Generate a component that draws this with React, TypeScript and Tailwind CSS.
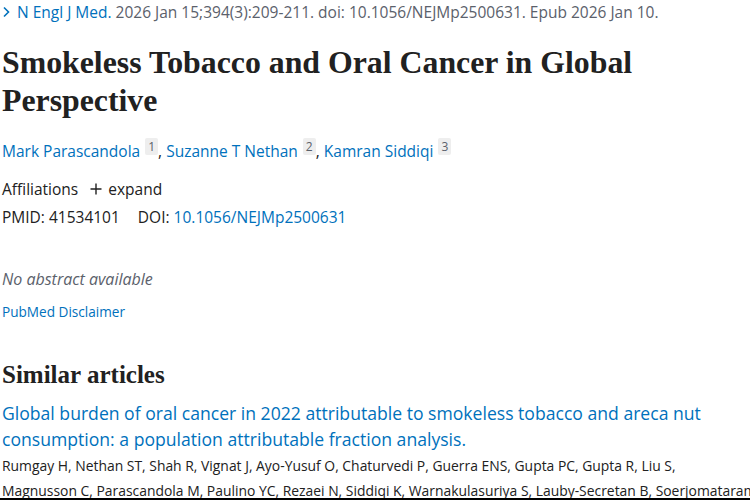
import React from 'react';

const sans = "font-['Open_Sans',_'Noto_Sans',_sans-serif]";
const serif = "font-['Liberation_Serif',_serif]";

const Sup = ({ n }: { n: string }) => (
  <sup className="ml-[5px] rounded-[2px] bg-[#eeeeee] px-[3px] text-[12px] text-[#5b616b] top-[-6px]">{n}</sup>
);

export default function App() {
  const authors = ['Mark Parascandola', 'Suzanne T Nethan', 'Kamran Siddiqi'];

  return (
    <div className={`relative h-[500px] w-[750px] overflow-hidden bg-white pl-[2px] ${sans}`}>
      <div className="flex items-center gap-[6px] pt-[2px] text-[15.5px] leading-[20px] text-[#5b616b]">
        <svg width="9" height="12" viewBox="0 0 9 12" className="text-[#0071bc]">
          <path d="M2 1.5 L6.5 6 L2 10.5" fill="none" stroke="currentColor" strokeWidth="1.6" />
        </svg>
        <p className="whitespace-nowrap">
          <span className="text-[#0071bc]">N Engl J Med.</span> 2026 Jan 15;394(3):209-211. doi: 10.1056/NEJMp2500631. Epub 2026 Jan 10.
        </p>
      </div>

      <h1 className={`mt-[22px] text-[31.8px] font-bold leading-[38px] text-[#212121] ${serif}`}>
        Smokeless Tobacco and Oral Cancer in Global Perspective
      </h1>

      <p className="mt-[20px] text-[15.5px] leading-[22px] text-[#0071bc]">
        {authors.map((a, i) => (
          <span key={a}>
            {a}
            <Sup n={String(i + 1)} />
            {i < authors.length - 1 && <span className="text-[#212121]">, </span>}
          </span>
        ))}
      </p>

      <div className="mt-[16px] flex items-center gap-[12px] text-[15.5px] leading-[22px] text-[#212121]">
        <span>Affiliations</span>
        <span className="flex items-center gap-[6px]">
          <svg width="12" height="12" viewBox="0 0 12 12">
            <path d="M6 0.5 V11.5 M0.5 6 H11.5" stroke="#212121" strokeWidth="1.4" />
          </svg>
          <span>expand</span>
        </span>
      </div>

      <p className="mt-[6px] text-[15.5px] leading-[22px] text-[#212121]">
        PMID: 41534101<span className="ml-[18px]">DOI: </span>
        <span className="text-[#0071bc]">10.1056/NEJMp2500631</span>
      </p>

      <p className="mt-[40px] text-[16px] italic leading-[22px] text-[#5b616b]">No abstract available</p>

      <p className="mt-[12px] text-[13.6px] leading-[20px] text-[#0071bc]">PubMed Disclaimer</p>

      <h2 className={`mt-[37px] text-[25px] font-bold leading-[32px] text-[#212121] ${serif}`}>Similar articles</h2>

      <p className="mt-[9px] w-[760px] text-[17.6px] leading-[26px] text-[#0071bc]">
        Global burden of oral cancer in 2022 attributable to smokeless tobacco and areca nut consumption: a population attributable fraction analysis.
      </p>
      <p className="mt-[1px] w-[820px] text-[13.9px] leading-[25px] text-[#212121]">
        Rumgay H, Nethan ST, Shah R, Vignat J, Ayo-Yusuf O, Chaturvedi P, Guerra ENS, Gupta PC, Gupta R, Liu S,
        <br />
        Magnusson C, Parascandola M, Paulino YC, Rezaei N, Siddiqi K, Warnakulasuriya S, Lauby-Secretan B, Soerjomataram I.
      </p>

      <div className="absolute bottom-0 left-0 h-[2px] w-full bg-black" />
    </div>
  );
}
